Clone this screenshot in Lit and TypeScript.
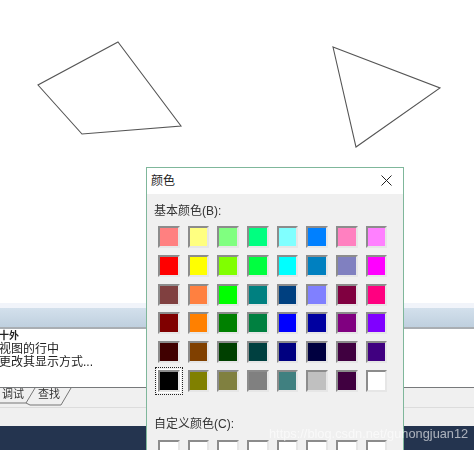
import { LitElement, html, css } from "lit";
import { customElement } from "lit/decorators.js";

const BASIC = [
  "#ff8080", "#ffff80", "#80ff80", "#00ff80", "#80ffff", "#0080ff", "#ff80c0", "#ff80ff",
  "#ff0000", "#ffff00", "#80ff00", "#00ff40", "#00ffff", "#0080c0", "#8080c0", "#ff00ff",
  "#804040", "#ff8040", "#00ff00", "#008080", "#004080", "#8080ff", "#800040", "#ff0080",
  "#800000", "#ff8000", "#008000", "#008040", "#0000ff", "#0000a0", "#800080", "#8000ff",
  "#400000", "#804000", "#004000", "#004040", "#000080", "#000040", "#400040", "#400080",
  "#000000", "#808000", "#808040", "#808080", "#408080", "#c0c0c0", "#400040", "#ffffff",
];

@customElement("app-root")
export class AppRoot extends LitElement {
  static styles = css`
    :host {
      display: block;
      position: relative;
      width: 474px;
      height: 450px;
      overflow: hidden;
      background: #fff;
      font-family: "Liberation Sans", "Noto Sans CJK SC", sans-serif;
    }
    .canvas { display: block; width: 474px; height: 303px; }
    .strip { height: 5px; background: #f1f4fa; }
    .bar {
      height: 19px;
      background: linear-gradient(#d3e0ec, #bfd0df);
      border-bottom: 2px solid #a9aeb3;
    }
    .output {
      height: 58px;
      background: #fff;
      color: #222;
      font-size: 12px;
      overflow: hidden;
      border-bottom: 1px solid #77797b;
      filter: blur(0.3px);
    }
    .output .small { font-size: 10px; line-height: 12px; padding-top: 1px; margin-bottom: 1px; margin-left: -1px; font-weight: 700; }
    .output .line { margin-left: -1px; white-space: nowrap; line-height: 13px; }
    .tabs {
      position: relative;
      height: 19px;
      background: #f0f0f0;
      border-bottom: 1px solid #dcdcdc;
      display: flex;
      gap: 14px;
      padding-left: 2px;
      font-size: 11px;
      line-height: 13px;
      color: #333;
      filter: blur(0.3px);
    }
    .tabs svg { position: absolute; left: 0; top: 0; }
    .tabs span { width: 22px; white-space: nowrap; }
    .status { height: 18px; background: #f0f0f0; }
    .footer { height: 25px; background: #24344f; }
    .dialog {
      position: absolute;
      left: 146px;
      top: 167px;
      width: 256px;
      height: 290px;
      border: 1px solid #7fb79b;
      background: #f0f0f0;
      color: #222;
      filter: blur(0.35px);
    }
    .title {
      height: 26px;
      background: #fff;
      display: flex;
      align-items: center;
      justify-content: space-between;
      padding: 0 11px 4px 4px;
      box-sizing: border-box;
      font-size: 12px;
    }
    .title svg { display: block; margin-top: 3px; }
    .body { padding: 10px 7px 0 7px; }
    .label { font-size: 12px; line-height: 14px; color: #333; }
    .grid {
      display: grid;
      grid-template-columns: repeat(8, 21px);
      column-gap: 8.7px;
      row-gap: 6.8px;
      margin: 8px 0 0 4px;
    }
    .swatch {
      position: relative;
      width: 21.5px;
      height: 22px;
      box-sizing: border-box;
      border: 2px solid;
      border-color: #8c8c8c #e6e6e6 #e6e6e6 #8c8c8c;
    }
    .swatch.sel { outline: 1px solid #fff; }
    .swatch.sel::after {
      content: "";
      position: absolute;
      inset: -5px;
      border: 1px dotted #222;
    }
    .custom { margin-top: 25px; }
    .custom-grid { margin-top: 9px; }
    .custom-grid .swatch { background: #fff; }
    .mark {
      position: absolute;
      left: 269px;
      top: 426px;
      font-size: 12.8px;
      line-height: 16px;
      white-space: nowrap;
      color: rgba(255, 255, 255, 0.62);
    }
  `;

  render() {
    return html`
      <svg class="canvas" viewBox="0 0 474 303" fill="none" stroke="#555" stroke-width="1.1">
        <polygon points="118,42 181,126 82,134 38,85"></polygon>
        <polygon points="333,47 440,88 356,147"></polygon>
      </svg>
      <div class="strip"></div>
      <div class="bar"></div>
      <div class="output">
        <div class="small">十外</div>
        <div class="line">视图的行中</div>
        <div class="line">更改其显示方式...</div>
      </div>
      <div class="tabs">
        <svg width="80" height="19" fill="none" stroke="#777" stroke-width="1">
          <path d="M0 15H26L35 0"></path>
          <path d="M26 15L30 17H61L71 0"></path>
        </svg>
        <span>调试</span>
        <span>查找</span>
      </div>
      <div class="status"></div>
      <div class="footer"></div>

      <div class="dialog">
        <div class="title">
          <span>颜色</span>
          <svg width="11" height="11" viewBox="0 0 11 11" fill="none" stroke="#222" stroke-width="1">
            <path d="M0.5 0.5L10.5 10.5M10.5 0.5L0.5 10.5"></path>
          </svg>
        </div>
        <div class="body">
          <div class="label">基本颜色(B):</div>
          <div class="grid">
            ${BASIC.map(
              (c, i) => html`<div class="swatch ${i === 40 ? "sel" : ""}" style="background:${c}"></div>`
            )}
          </div>
          <div class="label custom">自定义颜色(C):</div>
          <div class="grid custom-grid">
            ${Array.from({ length: 8 }, () => html`<div class="swatch"></div>`)}
          </div>
        </div>
      </div>
      <div class="mark">https://blog.csdn.net/guhongjuan12</div>
    `;
  }
}
